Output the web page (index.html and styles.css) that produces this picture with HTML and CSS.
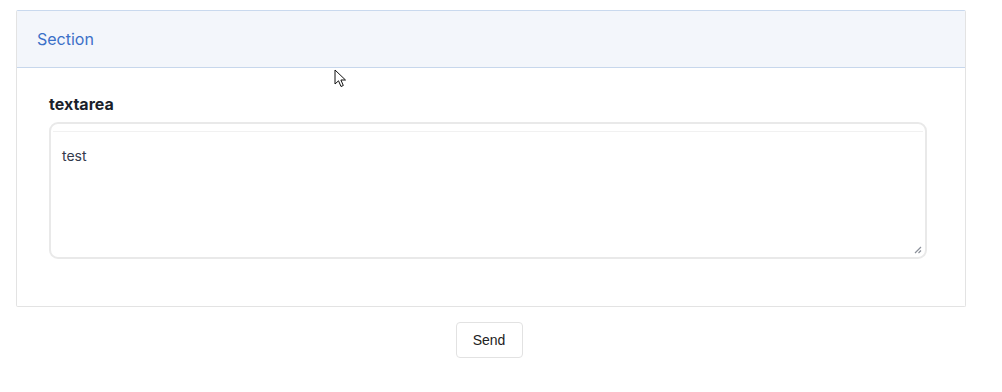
FILE: index.html
```html
<!DOCTYPE html>
<html>
<head>
<meta charset="utf-8">
<link rel="stylesheet" href="styles.css">
</head>
<body>
<div class="page">
  <section class="card">
    <header class="card-head">Section</header>
    <div class="card-body">
      <label class="field-label">textarea</label>
      <div class="ta">
        <div class="ta-bar"></div>
        <div class="ta-text">test</div>
        <svg class="grip" width="8" height="8" viewBox="0 0 8 8"><path d="M7 1L1 7M7 4.5L4.5 7" stroke="#8a8f99" stroke-width="1.2" fill="none"/></svg>
      </div>
    </div>
  </section>
  <div class="actions"><button class="btn">Send</button></div>
</div>
<svg class="cursor" width="14" height="20" viewBox="0 0 14 20"><path d="M1 1 L1 15 L4.5 11.8 L7 17.5 L9.3 16.5 L6.9 11 L11.5 11 Z" fill="#fff" stroke="#111" stroke-width="1" stroke-linejoin="round"/></svg>
</body>
</html>
```
FILE: styles.css
```css
html, body { margin: 0; padding: 0; background: #fff; }
body { font-family: Inter, "Noto Sans", sans-serif; position: relative; }
.page { padding: 10px 36px 0 16px; }
.card {
  border: 1px solid #e3e3e3;
  border-top-color: #c9d9ee;
  border-radius: 2px;
  width: 948px;
}
.card-head {
  background: #f3f6fb;
  height: 56px;
  border-bottom: 1px solid #c7d7ec;
  padding-left: 20px;
  display: flex;
  align-items: center;
  color: #3b70c8;
  font-size: 16px;
}
.card-body { padding: 26px 38px 47px 32px; }
.field-label {
  display: block;
  font-weight: 700;
  font-size: 16px;
  color: #1a1f2b;
  line-height: 20px;
  margin-bottom: 8px;
}
.ta {
  position: relative;
  height: 133px;
  border: 2px solid #e9e9e9;
  border-radius: 9px;
}
.ta-bar { height: 7px; border-bottom: 1px solid #f1f1f1; margin: 0 2px; }
.ta-text {
  padding: 15px 0 0 11px;
  font-size: 14px;
  color: #333a4d;
  line-height: 18px;
}
.grip { position: absolute; right: 3px; bottom: 3px; }
.actions { display: flex; justify-content: center; width: 950px; padding-top: 15px; }
.btn {
  font-family: "Liberation Sans", Arial, sans-serif;
  font-size: 14px;
  color: #222;
  background: #fff;
  border: 1px solid #e2e2e2;
  border-radius: 4px;
  width: 67px;
  height: 36px;
  padding: 0;
  margin-left: -4px;
}
.cursor { position: absolute; left: 334px; top: 69px; }
```
